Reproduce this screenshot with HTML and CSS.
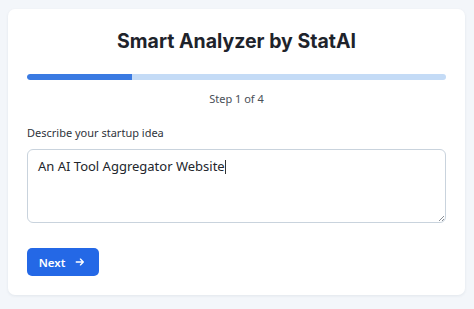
FILE: index.html
```html
<!DOCTYPE html>
<html>
<head>
<meta charset="utf-8">
<link rel="stylesheet" href="styles.css">
</head>
<body>
<div class="page">
  <div class="card">
    <h1 class="title">Smart Analyzer by StatAI</h1>
    <div class="progress"><div class="progress-fill" style="width:25%"></div></div>
    <div class="step">Step 1 of 4</div>
    <label class="label">Describe your startup idea</label>
    <div class="textarea">An AI Tool Aggregator Website<span class="caret"></span>
      <svg class="grip" width="6" height="6" viewBox="0 0 6 6"><path d="M6 1 L1 6 M6 4 L4 6" stroke="#8a8f96" stroke-width="1"/></svg>
    </div>
    <button class="btn">Next <svg class="arrow" width="10" height="10" viewBox="0 0 12 12"><path d="M1.5 6 H10 M6.5 2.5 L10 6 L6.5 9.5" fill="none" stroke="#fff" stroke-width="1.6" stroke-linecap="round" stroke-linejoin="round"/></svg></button>
  </div>
</div>
</body>
</html>
```
FILE: styles.css
```css
html, body { margin: 0; padding: 0; }
body {
  background: #f3f6fa;
  font-family: "Noto Sans", "Open Sans", sans-serif;
  width: 474px;
  height: 309px;
  overflow: hidden;
}
.page { padding: 9px 9px 0 8px; }
.card {
  background: #fff;
  border-radius: 7px;
  box-shadow: 0 1px 3px rgba(30, 50, 80, 0.08);
  padding: 20px 19px 19px 19px;
  width: 419px;
  display: flex;
  flex-direction: column;
}
.title {
  margin: 0;
  text-align: center;
  font-family: "Inter", sans-serif;
  font-weight: 700;
  font-size: 19.5px;
  line-height: 24px;
  color: #1e232b;
  letter-spacing: 0;
}
.progress {
  margin-top: 21px;
  height: 6px;
  border-radius: 3px;
  background: #c4dbf6;
  overflow: hidden;
}
.progress-fill {
  height: 100%;
  background: #3a7ae2;
  border-radius: 3px 0 0 3px;
}
.step {
  margin-top: 10px;
  text-align: center;
  font-size: 11px;
  line-height: 18px;
  color: #4a4f57;
}
.label {
  margin-top: 16px;
  font-size: 11px;
  line-height: 18px;
  color: #2f343b;
}
.textarea {
  position: relative;
  margin-top: 7px;
  border: 1px solid #c9d3dd;
  border-radius: 6px;
  padding: 7px 10px;
  box-sizing: border-box;
  height: 74px;
  font-size: 13px;
  line-height: 18px;
  color: #22262c;
}
.caret {
  display: inline-block;
  width: 1px;
  height: 14px;
  background: #333;
  vertical-align: -3px;
}
.grip { position: absolute; right: 1px; bottom: 1px; }
.btn {
  align-self: flex-start;
  margin-top: 25px;
  width: 72px;
  height: 28px;
  border: none;
  border-radius: 5px;
  background: #2468e6;
  color: #fff;
  font-family: "Noto Sans", sans-serif;
  font-size: 11.5px;
  font-weight: 600;
  display: flex;
  align-items: center;
  justify-content: center;
  gap: 10px;
  padding: 0 2px 0 0;
}
.arrow { display: block; }
```
